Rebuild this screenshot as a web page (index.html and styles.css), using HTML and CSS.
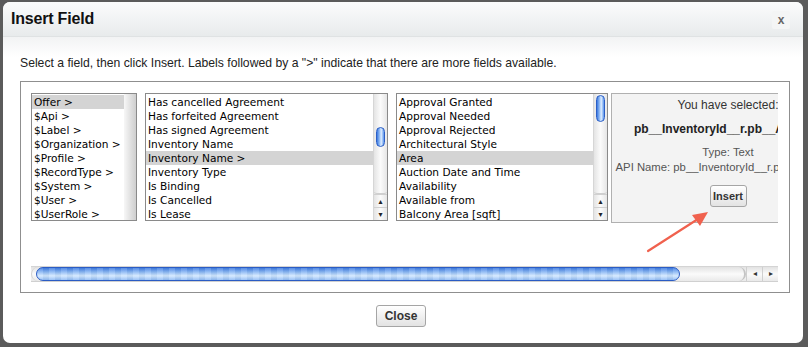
FILE: index.html
```html
<!DOCTYPE html>
<html>
<head>
<meta charset="utf-8">
<link rel="stylesheet" href="styles.css">
</head>
<body>
<div class="dialog">
  <div class="header">
    <h2 class="title">Insert Field</h2>
    <span class="close-x">x</span>
  </div>
  <div class="content">
    <p class="intro">Select a field, then click Insert. Labels followed by a "&gt;" indicate that there are more fields available.</p>
    <div class="box">
      <div class="scroller">
        <div class="lists">
          <div class="list list1">
            <ul class="items">
              <li class="sel">Offer &gt;</li>
              <li>$Api &gt;</li>
              <li>$Label &gt;</li>
              <li>$Organization &gt;</li>
              <li>$Profile &gt;</li>
              <li>$RecordType &gt;</li>
              <li>$System &gt;</li>
              <li>$User &gt;</li>
              <li>$UserRole &gt;</li>
            </ul>
            <div class="vtrack plain"></div>
          </div>
          <div class="list list2">
            <ul class="items">
              <li>Has cancelled Agreement</li>
              <li>Has forfeited Agreement</li>
              <li>Has signed Agreement</li>
              <li>Inventory Name</li>
              <li class="sel">Inventory Name &gt;</li>
              <li>Inventory Type</li>
              <li>Is Binding</li>
              <li>Is Cancelled</li>
              <li>Is Lease</li>
            </ul>
            <div class="vtrack">
              <div class="vtrough"><div class="vthumb t2"></div></div>
              <div class="varrow">&#9652;</div>
              <div class="varrow">&#9662;</div>
            </div>
          </div>
          <div class="list list3">
            <ul class="items">
              <li>Approval Granted</li>
              <li>Approval Needed</li>
              <li>Approval Rejected</li>
              <li>Architectural Style</li>
              <li class="sel">Area</li>
              <li>Auction Date and Time</li>
              <li>Availability</li>
              <li>Available from</li>
              <li>Balcony Area [sqft]</li>
            </ul>
            <div class="vtrack">
              <div class="vtrough"><div class="vthumb t3"></div></div>
              <div class="varrow">&#9652;</div>
              <div class="varrow">&#9662;</div>
            </div>
          </div>
          <div class="panel">
            <p class="p-sel">You have selected:</p>
            <p class="p-name">pb__InventoryId__r.pb__Area__c</p>
            <p class="p-meta p-type">Type: Text</p>
            <p class="p-meta">API Name: pb__InventoryId__r.pb__Area__c</p>
            <button class="btn insert">Insert</button>
          </div>
        </div>
        <div class="hbar">
          <div class="htrough">
            <div class="hthumb"></div>
          </div>
          <div class="harrow">&#9666;</div>
          <div class="harrow">&#9656;</div>
        </div>
      </div>
    </div>
    <div class="footer">
      <button class="btn close">Close</button>
    </div>
  </div>
  <svg class="arrow" width="80" height="60" viewBox="0 0 80 60">
    <line x1="6" y1="52" x2="56" y2="20" stroke="#f0614e" stroke-width="2.2" stroke-linecap="round"/>
    <polygon points="66,13 50,16 58,27" fill="#f0614e"/>
  </svg>
</div>
</body>
</html>
```
FILE: styles.css
```css
* { box-sizing: border-box; }
html, body { margin: 0; padding: 0; }
body {
  background: #5b5b5b;
  width: 808px;
  height: 347px;
  overflow: hidden;
  font-family: "Liberation Sans", Arial, sans-serif;
}
.dialog {
  position: relative;
  width: 800px;
  height: 341px;
  margin: 2px 0 0 3px;
  background: #fff;
  border-radius: 7px;
  overflow: hidden;
}
.header {
  height: 35px;
  display: flex;
  align-items: center;
  justify-content: space-between;
  padding: 0 13px 0 8px;
  background: linear-gradient(#fbfcfc, #e8ebec);
  border-bottom: 1px solid #dfe2e3;
}
.title {
  margin: 0;
  font-size: 16px;
  font-weight: bold;
  color: #111;
  letter-spacing: -0.2px;
}
.close-x {
  width: 18px;
  height: 18px;
  margin-top: 2px;
  border-radius: 2px;
  background: #f4f5f5;
  color: #666;
  font-size: 12px;
  font-weight: bold;
  display: flex;
  align-items: center;
  justify-content: center;
  line-height: 1;
}
.content {
  padding: 0 13px 0 17px;
  background: linear-gradient(#f2f3f4, #fff 20px);
}
.intro {
  margin: 0;
  padding: 19px 0 0 0;
  height: 44px;
  font-size: 12.2px;
  color: #222;
}
.box {
  border: 1px solid #8f8f8f;
  height: 212px;
  padding: 11px 12px 0 10px;
}
.scroller {
  width: 747px;
  overflow: hidden;
}
.lists {
  display: flex;
  align-items: flex-start;
  gap: 8px;
  height: 173px;
}
.list {
  flex: none;
  height: 128px;
  border: 1px solid #8a8a8a;
  display: flex;
  background: #fff;
  font-family: "DejaVu Sans", sans-serif;
  font-size: 10.6px;
  color: #000;
}
.list1 { width: 106px; }
.list2 { width: 243px; }
.list3 { width: 212px; margin-right: -5px; }
.items {
  list-style: none;
  margin: 0;
  padding: 1px 0 0 0;
  flex: 1;
  min-width: 0;
  overflow: hidden;
}
.items li {
  height: 14px;
  line-height: 14px;
  padding-left: 2px;
  white-space: nowrap;
}
.items li.sel { background: #d4d4d4; }
.vtrack {
  flex: none;
  width: 14px;
  display: flex;
  flex-direction: column;
  border-left: 1px solid #d6d6d6;
  background: linear-gradient(90deg, #e4e4e4, #fbfbfb 50%, #e6e6e6);
}
.vtrack.plain {
  width: 12px;
  border-left: none;
  background: linear-gradient(90deg, #f7f7f7, #dedede 60%, #cfcfcf);
}
.vtrough {
  flex: 1;
  position: relative;
  border-radius: 7px 7px 3px 3px;
  border-bottom: 1px solid #cfcfcf;
}
.vthumb {
  position: absolute;
  left: 2px;
  width: 9px;
  border-radius: 5px;
  border: 1px solid #2c5fc6;
  background: linear-gradient(90deg, #3a78e0, #a9cdfa 45%, #e3f0ff 60%, #5a94ec);
}
.t2 { top: 33px; height: 20px; }
.t3 { top: 1px; height: 27px; }
.varrow {
  height: 13px;
  font-size: 8px;
  line-height: 13px;
  text-align: center;
  color: #222;
  border-top: 1px solid #d0d0d0;
}
.panel {
  flex: 0 0 234px;
  height: 130px;
  border: 1px solid #b0b0b0;
  background: #f3f3f3;
  text-align: center;
  padding-top: 4px;
  color: #333;
}
.panel p { margin: 0; white-space: nowrap; }
.p-sel { font-size: 12px; line-height: 14px; }
.panel .p-name { font-size: 12px; font-weight: bold; line-height: 14px; margin-top: 10px; color: #222; }
.p-meta { font-size: 11.3px; line-height: 15px; color: #555; }
.panel .p-type { margin-top: 9px; }
.btn {
  font-family: "Liberation Sans", Arial, sans-serif;
  font-size: 11px;
  font-weight: bold;
  color: #333;
  background: linear-gradient(#ffffff, #f0f0f0 50%, #e3e3e3);
  border: 1px solid #a5a5a5;
  border-radius: 3px;
  padding: 0;
  height: 22px;
}
.insert { width: 37px; margin-top: 10px; }
.hbar {
  height: 16px;
  display: flex;
  background: linear-gradient(#e2e2e2, #fbfbfb 50%, #e9e9e9);
  border-top: 1px solid #d4d4d4;
  border-bottom: 1px solid #d0d0d0;
}
.htrough {
  flex: 1;
  position: relative;
  border-radius: 7px;
  border-left: 1px solid #cfcfcf;
  border-right: 2px solid #c4c4c4;
}
.hthumb {
  position: absolute;
  left: 4px;
  top: 0px;
  width: 644px;
  height: 14px;
  border-radius: 7px;
  border: 1px solid #2b5cc4;
  background:
    repeating-linear-gradient(90deg, rgba(255,255,255,0.12) 0 6px, rgba(0,0,0,0.03) 6px 12px),
    linear-gradient(#3f7de2, #8db9f4 35%, #d2e8ff 65%, #8fbaf4);
}
.harrow {
  width: 16px;
  font-size: 8px;
  line-height: 14px;
  text-align: center;
  color: #333;
  border-left: 1px solid #cfcfcf;
}
.footer {
  display: flex;
  justify-content: center;
  padding: 12px 8px 0 0;
}
.close { width: 50px; height: 22px; font-size: 12px; }
.arrow {
  position: absolute;
  left: 639px;
  top: 197px;
}
```
